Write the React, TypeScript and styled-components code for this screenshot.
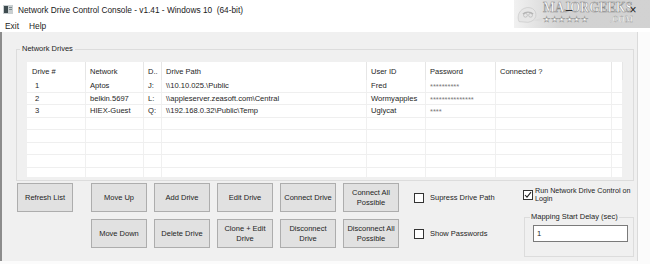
import React from 'react'
import styled, { createGlobalStyle } from 'styled-components'

const GlobalStyle = createGlobalStyle`
	html, body {
		margin: 0;
		padding: 0;
		background: #fbfbfb;
	}
	body {
		font-family: "Liberation Sans", Arial, sans-serif;
		color: #1e1e1e;
	}
	* {
		box-sizing: border-box;
	}
`

type Drive = {
	num: string
	network: string
	letter: string
	path: string
	user: string
	password: string
}

const drives: Drive[] = [
	{ num: '1', network: 'Aptos', letter: 'J:', path: '\\\\10.10.025.\\Public', user: 'Fred', password: '**********' },
	{ num: '2', network: 'belkin.5697', letter: 'L:', path: '\\\\appleserver.zeasoft.com\\Central', user: 'Wormyapples', password: '***************' },
	{ num: '3', network: 'HIEX-Guest', letter: 'Q:', path: '\\\\192.168.0.32\\Public\\Temp', user: 'Uglycat', password: '****' },
]

const columns = ['Drive #', 'Network', 'D..', 'Drive Path', 'User ID', 'Password', 'Connected ?', '']
const EMPTY_ROWS = 5

export default function App() {
	return (
		<>
			<GlobalStyle />
			<Window>
				{/* Title bar */}
				<TitleBar>
					<AppIcon width="10" height="9" viewBox="0 0 10 9">
						<rect x="0" y="0" width="10" height="9" fill="#c9cfd1" />
						<rect x="1" y="1" width="4" height="7" fill="#3e4b4f" />
						<rect x="6" y="2" width="3" height="1" fill="#7d8a8e" />
						<rect x="6" y="4" width="3" height="1" fill="#7d8a8e" />
					</AppIcon>
					<TitleText>Network Drive Control Console - v1.41 - Windows 10&nbsp; (64-bit)</TitleText>
					<WinControl $left={322}>–</WinControl>
					<WinControl $left={56}>×</WinControl>
				</TitleBar>

				{/* Watermark */}
				<Watermark>
					<svg width="46" height="28" viewBox="0 0 46 28">
						<path d="M8 26 C4 18 8 6 20 4 C30 3 36 10 34 18 C33 23 28 26 22 27 Z" fill="#e6e6e6" stroke="#c4c4c4" />
						<path d="M14 14 C18 10 26 10 30 14" stroke="#b5b5b5" strokeWidth="2" fill="none" />
						<circle cx="18" cy="16" r="3" fill="none" stroke="#b0b0b0" />
						<circle cx="26" cy="16" r="3" fill="none" stroke="#b0b0b0" />
						<path d="M30 24 L44 20 L44 26 Z" fill="#dcdcdc" />
					</svg>
					<MarkText>
						<MarkName>MAJORGEEKS</MarkName>
						<MarkSub>
							<span>★★★★★★</span>
							<span>.COM</span>
						</MarkSub>
					</MarkText>
				</Watermark>

				{/* Menu */}
				<MenuBar>
					<MenuItem>Exit</MenuItem>
					<MenuItem>Help</MenuItem>
				</MenuBar>

				<Body>
					<GroupBox>
						<GroupLegend>Network Drives</GroupLegend>
						<ListView>
							<HeaderRow>
								{columns.map((c, i) => (
									<HeaderCell key={i} $first={i === 0}>{c}</HeaderCell>
								))}
							</HeaderRow>
							{drives.map((d) => (
								<Row key={d.num}>
									<Cell $first>{d.num}</Cell>
									<Cell>{d.network}</Cell>
									<Cell>{d.letter}</Cell>
									<Cell>{d.path}</Cell>
									<Cell>{d.user}</Cell>
									<Cell><Masked>{d.password}</Masked></Cell>
									<Cell />
									<Cell />
								</Row>
							))}
							{Array.from({ length: EMPTY_ROWS }).map((_, r) => (
								<Row key={'e' + r}>
									{columns.map((_c, i) => <Cell key={i} />)}
								</Row>
							))}
						</ListView>
					</GroupBox>

					<Controls>
						<Button>Refresh List</Button>

						<ButtonGrid>
							<Button>Move Up</Button>
							<Button>Add Drive</Button>
							<Button>Edit Drive</Button>
							<Button>Connect Drive</Button>
							<Button>Connect All<br />Possible</Button>
							<Button>Move Down</Button>
							<Button>Delete Drive</Button>
							<Button>Clone + Edit<br />Drive</Button>
							<Button>Disconnect<br />Drive</Button>
							<Button>Disconnect All<br />Possible</Button>
						</ButtonGrid>

						<CheckColumn>
							<CheckRow>
								<Box />
								<span>Supress Drive Path</span>
							</CheckRow>
							<CheckRow>
								<Box />
								<span>Show Passwords</span>
							</CheckRow>
						</CheckColumn>

						<RightColumn>
							<RunRow>
								<Box>
									<svg width="8" height="8" viewBox="0 0 8 8">
										<path d="M1 4 L3 6.2 L7 1.2" stroke="#222" strokeWidth="1.1" fill="none" />
									</svg>
								</Box>
								<RunLabel>Run Network Drive Control on<br />Login</RunLabel>
							</RunRow>
							<DelayBox>
								<DelayLegend>Mapping Start Delay (sec)</DelayLegend>
								<TextBox>1</TextBox>
							</DelayBox>
						</RightColumn>
					</Controls>
				</Body>
			</Window>
		</>
	)
}

const Window = styled.div`
	position: relative;
	width: 650px;
	height: 264px;
	overflow: hidden;
	display: flex;
	flex-direction: column;
	background: #fbfbfb;
`

const TitleBar = styled.div`
	height: 20px;
	background: #fff;
	display: flex;
	align-items: center;
	padding-left: 3px;
	font-size: 8.3px;
	color: #1a1a1a;
`

const AppIcon = styled.svg`
	display: block;
	margin-right: 5px;
	margin-top: -1px;
`

const TitleText = styled.span`
	white-space: nowrap;
`

const WinControl = styled.span<{ $left: number }>`
	position: relative;
	z-index: 2;
	margin-left: ${(p) => p.$left}px;
	font-size: 12px;
	color: #222;
	line-height: 12px;
	width: 8px;
	text-align: center;
`

const Watermark = styled.div`
	position: absolute;
	top: 0;
	right: 0;
	width: 136px;
	height: 28px;
	display: flex;
	align-items: stretch;
	background: linear-gradient(90deg, rgba(215, 215, 215, 0.35), rgba(205, 205, 205, 0.9) 35%);
	z-index: 1;
`

const MarkText = styled.div`
	display: flex;
	flex-direction: column;
`

const MarkName = styled.div`
	font-family: "Liberation Serif", "Times New Roman", serif;
	font-weight: bold;
	font-size: 15px;
	line-height: 14px;
	color: #fff;
	-webkit-text-stroke: 0.6px #8a8a8a;
	transform: scaleX(0.84);
	transform-origin: left center;
	white-space: nowrap;
`

const MarkSub = styled.div`
	display: flex;
	justify-content: space-between;
	width: 90px;
	margin-top: 1px;
	font-family: "Liberation Serif", serif;
	font-weight: bold;
	font-size: 8px;
	line-height: 10px;
	color: #fff;
	-webkit-text-stroke: 0.3px #9a9a9a;
	letter-spacing: 0.5px;
`

const MenuBar = styled.div`
	height: 12px;
	background: #fff;
	display: flex;
	align-items: center;
	gap: 10px;
	padding-left: 5px;
	font-size: 8.4px;
`

const MenuItem = styled.span`
	line-height: 12px;
`

const Body = styled.div`
	height: 229px;
	width: 638px;
	background: #f0f0f0;
	border-left: 2px solid #8c8c8c;
	border-right: 1px solid #dadada;
	padding-top: 12px;
	font-size: 7.5px;
`

const GroupBox = styled.fieldset`
	margin: 0 0 0 14px;
	width: 618px;
	min-width: 0;
	padding: 0;
	border: 1px solid #dcdcdc;
`

const GroupLegend = styled.legend`
	margin-left: 3px;
	padding: 0 2px;
	height: 10px;
	font-size: 7.5px;
	line-height: 10px;
`

const ListView = styled.div`
	margin: 8px 10px 3px 10px;
	height: 115px;
	background: #fff;
	overflow: hidden;
`

const rowColumns = '59px 58px 18px 205px 59px 70px 116px 11px'

const HeaderRow = styled.div`
	display: grid;
	grid-template-columns: ${rowColumns};
	height: 18px;
`

const HeaderCell = styled.div<{ $first?: boolean }>`
	border-right: 1px solid #e6e6e6;
	padding: 5px 0 0 ${(p) => (p.$first ? 5 : 4)}px;
	font-size: 7.5px;
	line-height: 10px;
	white-space: nowrap;
	overflow: hidden;
`

const Row = styled.div`
	display: grid;
	grid-template-columns: ${rowColumns};
	height: 12.5px;
	border-bottom: 1px solid #efefef;
`

const Cell = styled.div<{ $first?: boolean }>`
	border-right: 1px solid #f0f0f0;
	padding-left: ${(p) => (p.$first ? 8 : 4)}px;
	font-size: 7.6px;
	line-height: 12px;
	white-space: nowrap;
	overflow: hidden;
`

const Masked = styled.span`
	color: #7a7a7a;
	font-size: 7.5px;
	position: relative;
	top: 1px;
`

const Controls = styled.div`
	display: flex;
	align-items: flex-start;
	margin-top: 2px;
	padding-left: 15px;
`

const Button = styled.button`
	width: 56px;
	height: 29px;
	padding: 0 1px;
	margin: 0;
	background: #e1e1e1;
	border: 1px solid #adadad;
	border-radius: 0;
	font-family: "Liberation Sans", Arial, sans-serif;
	font-size: 7.5px;
	line-height: 9.5px;
	color: #1e1e1e;
	white-space: nowrap;
`

const ButtonGrid = styled.div`
	display: grid;
	grid-template-columns: repeat(5, 56px);
	grid-auto-rows: 29px;
	gap: 7px;
	margin-left: 18px;
`

const CheckColumn = styled.div`
	display: grid;
	grid-auto-rows: 29px;
	row-gap: 7px;
	width: 109px;
	margin-left: 15px;
`

const CheckRow = styled.div`
	display: flex;
	align-items: center;
	gap: 6px;
	font-size: 7.5px;
	white-space: nowrap;
`

const Box = styled.span`
	width: 10px;
	height: 10px;
	flex: none;
	border: 1px solid #333;
	background: #fff;
	display: inline-flex;
	align-items: center;
	justify-content: center;
`

const RightColumn = styled.div`
	display: flex;
	flex-direction: column;
	padding-top: 2px;
`

const RunRow = styled.div`
	display: flex;
	align-items: center;
	gap: 2px;
	height: 20px;
`

const RunLabel = styled.span`
	font-size: 7.2px;
	line-height: 8.5px;
	white-space: nowrap;
`

const DelayBox = styled.fieldset`
	margin: 7px 0 0 1px;
	width: 110px;
	min-width: 0;
	padding: 3px 5px 14px 8px;
	border: 1px solid #dcdcdc;
`

const DelayLegend = styled.legend`
	margin-left: -3px;
	padding: 0 1px;
	height: 10px;
	font-size: 7.5px;
	line-height: 10px;
	white-space: nowrap;
`

const TextBox = styled.div`
	width: 95px;
	height: 17px;
	background: #fff;
	border: 1px solid #7a7a7a;
	padding-left: 3px;
	font-size: 7.6px;
	line-height: 15px;
`
